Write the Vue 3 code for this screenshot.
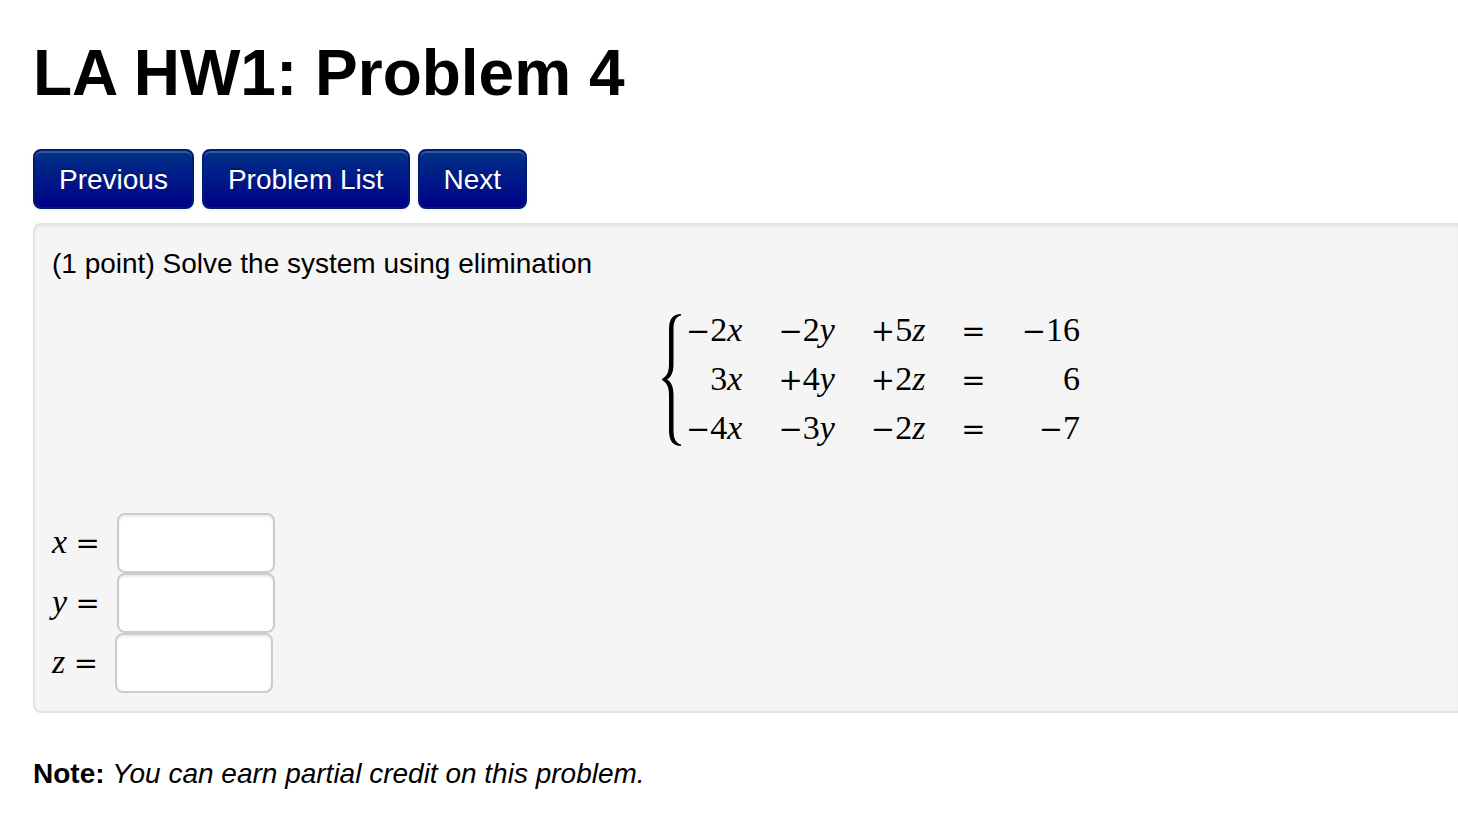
<script setup>
const rows = [
  { terms: [['−', '2', 'x'], ['−', '2', 'y'], ['+', '5', 'z']], sign: '−', value: '16' },
  { terms: [['', '3', 'x'], ['+', '4', 'y'], ['+', '2', 'z']], sign: '', value: '6' },
  { terms: [['−', '4', 'x'], ['−', '3', 'y'], ['−', '2', 'z']], sign: '−', value: '7' },
]
const unknowns = ['x', 'y', 'z']
</script>

<template>
  <main class="page">
    <h1>LA HW1: Problem 4</h1>
    <nav class="nav">
      <button type="button">Previous</button>
      <button type="button">Problem List</button>
      <button type="button">Next</button>
    </nav>
    <section class="problem">
      <p class="prompt">(1 point) Solve the system using elimination</p>
      <div class="system">
        <svg class="brace" viewBox="0 0 20 132" aria-hidden="true">
          <path d="M19 0C11 0 7 5 7 15V50C7 58 5 62 0 65V66C5 69 7 73 7 81V116C7 127 11 132 19 132V130.500C14 129.500 11.500 125 11.500 116V81C11.500 73 9.500 68 5 65.500C9.500 63 11.500 58 11.500 50V15C11.500 7 14 2.500 19 1.500Z" />
        </svg>
        <table>
          <tbody>
            <tr v-for="row in rows" :key="row.value">
              <td v-for="[sign, factor, name] in row.terms" :key="name"><span class="op">{{ sign }}</span>{{ factor }}<i>{{ name }}</i></td>
              <td><span class="op">=</span></td>
              <td><span class="op">{{ row.sign }}</span>{{ row.value }}</td>
            </tr>
          </tbody>
        </table>
      </div>
      <form class="answers" @submit.prevent>
        <div v-for="name in unknowns" :key="name" class="answer">
          <label :for="name"><i>{{ name }}</i> <span class="op">=</span></label>
          <input :id="name" type="text" autocomplete="off" />
        </div>
      </form>
    </section>
    <p class="note"><strong>Note:</strong> <em>You can earn partial credit on this problem.</em></p>
  </main>
</template>

<style>
body {
  background: #fff;
  overflow-x: hidden;
}
</style>

<style scoped>
.page {
  padding: 37px 0 20px 33px;
  font-family: "Liberation Sans", Arial, sans-serif;
  font-size: 28px;
  line-height: 40px;
  color: #000;
}
h1 {
  margin: 0 0 40px;
  font-size: 64px;
  line-height: 72px;
}
.nav {
  display: flex;
  gap: 8px;
  margin-bottom: 14px;
}
button {
  box-sizing: border-box;
  height: 60px;
  padding: 2px 24px 0;
  border: 2px solid #001c70;
  border-radius: 8px;
  background: linear-gradient(#003388, #000088) border-box;
  box-shadow: inset 0 2px 0 rgba(255, 255, 255, 0.2), 0 2px 4px rgba(0, 0, 0, 0.05);
  font: inherit;
  color: #fff;
  text-shadow: 0 -2px 0 rgba(0, 0, 0, 0.25);
}
.problem {
  padding: 19px 18px 18px 17px;
  border: 2px solid #e3e3e3;
  border-right: 0;
  border-radius: 8px 0 0 8px;
  background: #f5f5f5;
  box-shadow: inset 0 2px 2px rgba(0, 0, 0, 0.05);
}
.prompt {
  margin: 0 0 22px;
}
.system {
  display: flex;
  justify-content: center;
  align-items: center;
  margin: 0 0 60px 250px;
  font-family: "Liberation Serif", "Times New Roman", serif;
  font-size: 34px;
}
.brace {
  width: 20px;
  height: 132px;
  margin-right: 4px;
}
table {
  border-collapse: collapse;
}
td {
  height: 49px;
  box-sizing: border-box;
  padding: 0 0 2px 36px;
  text-align: right;
  white-space: nowrap;
}
td:first-child {
  padding-left: 0;
}
.op {
  font-family: "DejaVu Serif", serif;
  font-size: 29px;
  line-height: 1;
}
.answers {
  font-family: "Liberation Serif", "Times New Roman", serif;
  font-size: 34px;
}
.answer {
  display: flex;
  align-items: center;
}
label {
  margin-right: 17px;
  padding-bottom: 2px;
}
input {
  box-sizing: border-box;
  width: 158px;
  height: 60px;
  padding: 8px 12px;
  border: 2px solid #ccc;
  border-radius: 8px;
  background: #fff;
  box-shadow: inset 0 2px 2px rgba(0, 0, 0, 0.075);
  font: inherit;
}
.note {
  margin: 41px 0 0;
}
</style>
